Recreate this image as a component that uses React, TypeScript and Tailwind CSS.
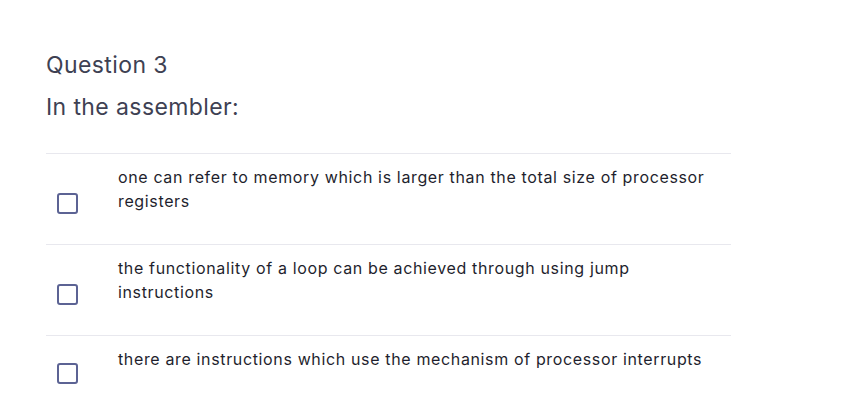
const options = [
  "one can refer to memory which is larger than the total size of processor registers",
  "the functionality of a loop can be achieved through using jump instructions",
  "there are instructions which use the mechanism of processor interrupts",
];

function Checkbox() {
  return (
    <span className="block w-[21px] h-[21px] rounded-[3px] border-2 border-[#5c6394] bg-white" />
  );
}

export default function App() {
  return (
    <div className="min-h-screen bg-white font-['Inter',sans-serif]">
      <div className="pl-[46px] pt-[50px] w-[731px]">
        <h2 className="text-[23px] leading-[30px] tracking-[0.4px] text-[#3e4153] font-normal">Question 3</h2>
        <p className="mt-[12px] text-[23px] leading-[30px] tracking-[0.4px] text-[#3e4153]">In the assembler:</p>

        <ul className="mt-[31px]">
          {options.map((text) => (
            <li key={text} className="flex items-center border-t border-[#e8e8ee]">
              <div className="w-[72px] pl-[11px] pt-[9px] shrink-0">
                <Checkbox />
              </div>
              <div className="pt-[11px] pb-[31px] pr-[10px] text-[16px] leading-[24px] tracking-[0.64px] text-[#1f1f2e]">
                {text}
              </div>
            </li>
          ))}
        </ul>
      </div>
    </div>
  );
}
